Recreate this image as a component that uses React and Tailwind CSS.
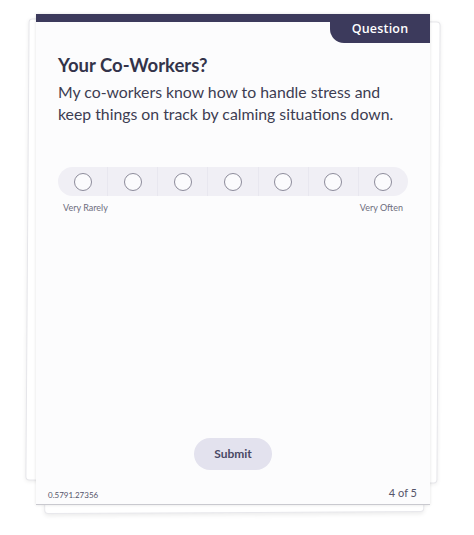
import React from "react";

export default function App() {
  const opts = [1, 2, 3, 4, 5, 6, 7];
  return (
    <div className="w-[474px] h-[535px] bg-white overflow-hidden" style={{ fontFamily: "Lato, 'Open Sans', sans-serif" }}>
      <div className="relative ml-[36px] pt-[14px] w-[394px]">
        <div className="absolute left-[-9px] top-[20px] w-[412px] h-[462px] bg-white rounded-[4px] border border-[#e6e6ea] shadow-[0_1px_4px_rgba(0,0,0,0.08)] rotate-[0.4deg]" />
        <div className="absolute left-[7px] top-[30px] w-[380px] h-[483px] bg-white rounded-[4px] border border-[#e8e8ec] shadow-[0_2px_4px_rgba(0,0,0,0.08)] rotate-[-0.3deg]" />
        <div className="relative flex flex-col w-[394px] h-[491px] bg-[#fcfcfd] border-b border-[#c9c9cf] shadow-[0_0_3px_rgba(0,0,0,0.12)]">
          <div className="h-[8px] bg-[#3c3a5c]" />
          <div className="absolute top-0 right-0 w-[100px] h-[29px] bg-[#3c3a5c] rounded-bl-[14px] flex items-center justify-center pt-[1px]">
            <span className="text-white text-[12.5px] font-semibold tracking-[0.2px]" style={{ fontFamily: "'Open Sans', sans-serif" }}>Question</span>
          </div>
          <div className="px-[22px] pt-[31px]">
            <h1 className="text-[18.5px] leading-[24px] font-bold text-[#33334a]">Your Co-Workers?</h1>
            <p className="mt-[4px] text-[15.8px] leading-[22px] text-[#3d3d52]">
              My co-workers know how to handle stress and keep things on track by calming situations down.
            </p>
          </div>
          <div className="px-[22px] mt-[42px]">
            <div className="flex h-[29px] rounded-full bg-[#f0eff5] overflow-hidden">
              {opts.map((o, i) => (
                <div key={o} className={"flex-1 flex items-center justify-center " + (i > 0 ? "border-l border-[#e8e7ef]" : "")}>
                  <div className="w-[18px] h-[18px] rounded-full border border-[#8c8b9a] bg-[#fbfbfd]" />
                </div>
              ))}
            </div>
            <div className="flex justify-between px-[5px] mt-[5px] text-[9px] text-[#6e6d7e]">
              <span>Very Rarely</span>
              <span>Very Often</span>
            </div>
          </div>
          <div className="flex-1" />
          <div className="flex justify-center">
            <button className="w-[78px] h-[32px] rounded-full bg-[#e3e2ee] text-[12px] font-bold text-[#4a4965]">Submit</button>
          </div>
          <div className="flex justify-between items-end px-[12px] pt-[15px] pb-[3px]">
            <span className="text-[8px] text-[#55546a]">0.5791.27356</span>
            <span className="text-[11px] text-[#55546a] mr-[1px]">4 of 5</span>
          </div>
        </div>
      </div>
    </div>
  );
}
